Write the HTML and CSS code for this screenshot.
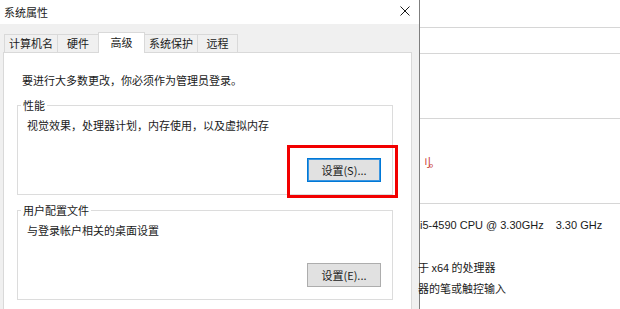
FILE: index.html
```html
<!DOCTYPE html>
<html lang="zh-CN">
<head>
    <meta charset="UTF-8">
    <meta name="viewport" content="width=device-width, initial-scale=1.0">
    <title>系统属性</title>

    <link rel="stylesheet" href="styles.css">
</head>
<body>

<div class="dialog">
    <div class="titlebar">
        <span class="title">系统属性</span>
        <svg class="close" width="10" height="10" viewBox="0 0 10 10">
            <path d="M0.5 0.5 L9.5 9.5 M9.5 0.5 L0.5 9.5" stroke="#1a1a1a" stroke-width="1" fill="none"/>
        </svg>
    </div>

    <div class="tabs">
        <div class="tab t-name">计算机名</div>
        <div class="tab t-hw">硬件</div>
        <div class="tab t-adv active">高级</div>
        <div class="tab t-prot">系统保护</div>
        <div class="tab t-remote">远程</div>
    </div>

    <div class="panel">
        <p class="notice">要进行大多数更改，你必须作为管理员登录。</p>

        <fieldset class="group">
            <legend>性能</legend>
            <p>视觉效果，处理器计划，内存使用，以及虚拟内存</p>
            <div class="actions">
                <div class="btn-wrap">
                    <button class="btn focused">设置(S)...</button>
                    <span class="highlight"></span>
                </div>
            </div>
        </fieldset>

        <fieldset class="group">
            <legend>用户配置文件</legend>
            <p>与登录帐户相关的桌面设置</p>
            <div class="actions">
                <div class="btn-wrap">
                    <button class="btn">设置(E)...</button>
                </div>
            </div>
        </fieldset>
    </div>
</div>

<!-- the settings window behind the dialog -->
<div class="behind">
    <div class="row r1"></div>
    <div class="row r2"></div>
    <div class="row r3"></div>
    <div class="row r4">
        <div class="line warn">刂。</div>
    </div>
    <div class="specs">
        <div class="line cpu"><span>i5-4590 CPU @ 3.30GHz</span><span class="freq">3.30 GHz</span></div>
        <div class="line cjk arch">于 x64 的处理器</div>
        <div class="line cjk pen">器的笔或触控输入</div>
    </div>
</div>

</body>
</html>
```

FILE: styles.css
```css
body {
    margin: 0;
    height: 309px;
    overflow: hidden;
    display: flex;
    font-family: "Noto Sans CJK SC", "Noto Sans", sans-serif;
    font-size: 11px;
    color: #1a1a1a;
    background: #fff;
}

.dialog {
    width: 419px;
    flex: none;
    display: flex;
    flex-direction: column;
    background: #f0f0f0;
    border-right: 1px solid #7f7f7f;
}

.titlebar {
    height: 24px;
    background: #fff;
    display: flex;
    align-items: center;
    justify-content: space-between;
    padding: 0 9px 0 4px;
}

.title {
    line-height: 16px;
    margin-top: -1px;
}

.close {
    display: block;
    margin-top: -2px;
}

/* tab strip */
.tabs {
    height: 28px;
    display: flex;
    align-items: flex-end;
    padding-left: 4px;
}

.tab {
    box-sizing: border-box;
    height: 18px;
    line-height: 17px;
    text-align: center;
    border: 1px solid #d9d9d9;
    border-bottom: none;
    margin-left: -1px;
    background: #f0f0f0;
}

.tab:first-child {
    margin-left: 0;
}

.t-name { width: 54px; }
.t-hw { width: 42px; }
.t-adv { width: 47px; }
.t-prot { width: 54px; }
.t-remote { width: 41px; }

.tab.active {
    position: relative;
    z-index: 1;
    height: 21px;
    line-height: 19px;
    margin-bottom: -1px;
    background: #fff;
}

.panel {
    flex: 1;
    width: 409px;
    box-sizing: border-box;
    margin-left: 3px;
    background: #fff;
    border: 1px solid #d9d9d9;
    border-bottom: none;
}

.notice {
    margin: 19px 0 0 18px;
    line-height: 16px;
}

/* group boxes */
.group {
    width: 376px;
    box-sizing: border-box;
    margin: 9px 0 0 13px;
    padding: 0 11px 12px 0;
    border: 1px solid #dcdcdc;
    min-width: 0;
}

.group + .group {
    margin-top: 7px;
}

.group legend {
    margin-left: 3px;
    padding: 0 2px;
    line-height: 16px;
}

.group p {
    margin: 4px 0 0 9px;
    line-height: 16px;
}

.actions {
    display: flex;
    justify-content: flex-end;
    margin-top: 25px;
}

.btn-wrap {
    position: relative;
}

.btn {
    display: block;
    width: 74px;
    height: 24px;
    padding: 0;
    font-family: inherit;
    font-size: 11px;
    color: #1a1a1a;
    background: #e1e1e1;
    border: 1px solid #adadad;
}

.btn.focused {
    border-color: #0078d7;
    box-shadow: inset 0 0 0 1px #3c96e0;
}

.highlight {
    position: absolute;
    top: -13px;
    right: -17px;
    bottom: -16px;
    left: -20px;
    border: 3px solid #f20000;
}

/* window behind */
.behind {
    flex: 1;
    min-width: 0;
    background: #fff;
}

.row {
    border-bottom: 1px solid #d6d6d6;
}

.r1 { height: 27px; }
.r2 { height: 25px; }
.r3 { height: 64px; }

.r4 {
    height: 49px;
    padding-top: 35px;
}

.line {
    white-space: nowrap;
    line-height: 16px;
}

.warn {
    letter-spacing: -2px;
    color: #c42b1c;
}

.specs {
    padding-top: 13px;
}

.cpu {
    font-family: "Liberation Sans", sans-serif;
    font-size: 11px;
}

.cpu .freq {
    margin-left: 12px;
}

.arch {
    margin-top: 26px;
    margin-left: -2px;
}

.pen {
    margin-top: 5px;
    margin-left: -2px;
}
```
